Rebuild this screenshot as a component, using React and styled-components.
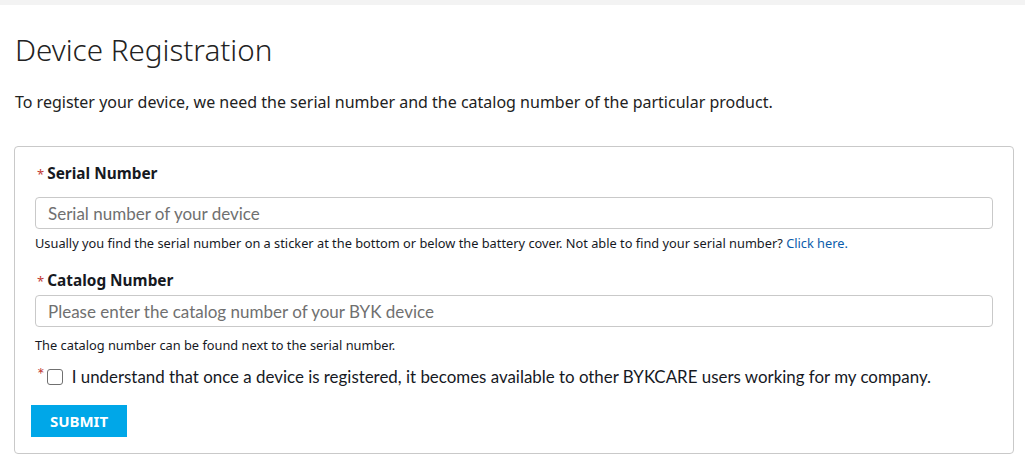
import React, { useState } from 'react';
import styled, { createGlobalStyle } from 'styled-components';

const GlobalStyle = createGlobalStyle`
  * { box-sizing: border-box; }
  body {
    margin: 0;
    background: #fff;
    font-family: "Noto Sans", "Open Sans", sans-serif;
    color: #222;
  }
`;

const TopBar = styled.div`
  height: 5px;
  background-color: #f3f3f3;
`;

const Page = styled.div`
  padding: 0 11px 0 14px;
`;

const Title = styled.h1`
  margin: 25px 0 0 1px;
  font-size: 29.6px;
  font-weight: 300;
  line-height: 40px;
  color: #222;
`;

const Intro = styled.p`
  margin: 21px 0 0 1px;
  font-size: 16px;
  line-height: 22px;
  color: #222;
`;

const Card = styled.div`
  margin-top: 33px;
  width: 1000px;
  border: 1px solid #c9c9c9;
  border-radius: 4px;
  padding: 15px 20px 16px 16px;
`;

const Field = styled.div`
  display: flex;
  flex-direction: column;
  margin-bottom: ${(props) => props.gap || '0px'};
`;

const Label = styled.label`
  display: flex;
  align-items: baseline;
  margin: 0 0 ${(props) => props.below || '10px'} 6px;
  font-size: 15.4px;
  font-weight: 700;
  line-height: 24px;
  color: #16191f;
`;

const Star = styled.span`
  color: #c23934;
  font-size: 13px;
  font-weight: 400;
  margin-right: 3px;
`;

const Input = styled.input`
  width: 958px;
  margin-left: 4px;
  height: 32px;
  padding: 0 12px;
  border: 1px solid #c9c9c9;
  border-radius: 4px;
  font-family: Lato, "Open Sans", sans-serif;
  font-size: 17px;
  color: #222;
  outline: none;
  &::placeholder {
    color: #707070;
  }
`;

const Help = styled.div`
  margin: ${(props) => props.top || '5px'} 0 0 4px;
  font-size: 12.8px;
  line-height: 18px;
  color: #16191f;
`;

const Link = styled.a`
  color: #0b5cab;
  text-decoration: none;
`;

const CheckRow = styled.label`
  display: flex;
  align-items: center;
  margin: 12px 0 0 6px;
  font-family: Lato, "Open Sans", sans-serif;
  font-size: 16.9px;
  color: #16191f;
`;

const CheckStar = styled.span`
  color: #c23934;
  font-size: 18px;
  line-height: 18px;
  align-self: flex-start;
  margin-top: -1px;
  margin-right: 2px;
`;

const Box = styled.span`
  width: 16px;
  height: 16px;
  border: 1px solid #707070;
  border-radius: 3px;
  background: #fff;
  margin-right: 9px;
`;

const SubmitButton = styled.button`
  margin-top: 18px;
  width: 96px;
  height: 32px;
  border: none;
  background-color: #00a7e8;
  color: #fff;
  font-family: "Noto Sans", "Open Sans", sans-serif;
  font-size: 15px;
  font-weight: 700;
  cursor: pointer;
`;

export default function App() {
  const [serial, setSerial] = useState('');
  const [catalog, setCatalog] = useState('');

  return (
    <>
      <GlobalStyle />
      <TopBar />
      <Page>
        <Title>Device Registration</Title>
        <Intro>
          To register your device, we need the serial number and the catalog number of the particular product.
        </Intro>
        <Card>
          <Field gap="17px">
            <Label below="11px">
              <Star>*</Star>Serial Number
            </Label>
            <Input
              placeholder="Serial number of your device"
              value={serial}
              onChange={(e) => setSerial(e.target.value)}
            />
            <Help>
              Usually you find the serial number on a sticker at the bottom or below the battery cover. Not able to find your serial number? <Link href="#">Click here.</Link>
            </Help>
          </Field>
          <Field>
            <Label below="2px">
              <Star>*</Star>Catalog Number
            </Label>
            <Input
              placeholder="Please enter the catalog number of your BYK device"
              value={catalog}
              onChange={(e) => setCatalog(e.target.value)}
            />
            <Help top="9px">The catalog number can be found next to the serial number.</Help>
          </Field>
          <CheckRow>
            <CheckStar>*</CheckStar>
            <Box />
            I understand that once a device is registered, it becomes available to other BYKCARE users working for my company.
          </CheckRow>
          <SubmitButton>SUBMIT</SubmitButton>
        </Card>
      </Page>
    </>
  );
}
